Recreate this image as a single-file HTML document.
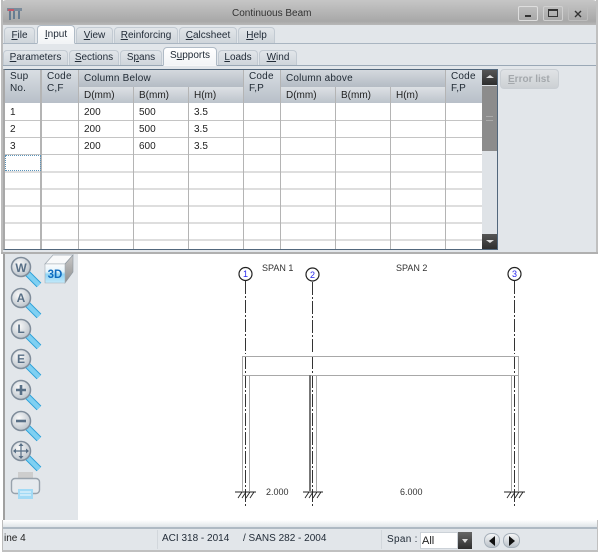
<!DOCTYPE html>
<html><head><meta charset="utf-8">
<style>
html,body{margin:0;padding:0;background:#fff}
body{width:600px;height:554px;position:relative;overflow:hidden;font-family:"Liberation Sans",sans-serif;font-size:10px;color:#222}
.a{position:absolute}
.t{position:absolute;white-space:nowrap;line-height:12px}
u{text-decoration:underline}
.tab{position:absolute;background:linear-gradient(#e2e6ea,#cfd5db);border:1px solid #c2cad2;border-bottom:none;border-radius:4px 4px 0 0;box-sizing:border-box;text-align:center;color:#222c38;font-size:10px;line-height:15px}
.tab.on{background:linear-gradient(#fff,#f2f4f6);border-color:#b0bbc6}
.v{position:absolute;width:1px;background:#b4b4b4}
.h{position:absolute;height:1px;background:#c4c4c4;left:5px;width:477px}
.l{height:2px;background:#dedede}
.h8{font-size:10px;letter-spacing:.2px;color:#1f2933}
.c{font-size:10px;color:#222}
.btn{position:absolute;width:20px;height:15px;top:6px;border:1px solid #cfcfcf;border-radius:2px;box-sizing:border-box;background:linear-gradient(#bdbdbd,#a8a8a8)}
</style></head><body>
<div class="a" style="left:1px;top:0;width:597px;height:25px;background:linear-gradient(#c6c6c6,#a8a8a8 85%,#b8b8b8);border-radius:5px 5px 0 0"></div>
<div class="a" style="left:1px;top:0;width:2px;height:254px;background:#bcbcbc"></div>
<div class="a" style="left:596px;top:0;width:2px;height:254px;background:#c0c0c0"></div>
<div class="a" style="left:3px;top:25px;width:593px;height:229px;background:#e2e6ea"></div>
<svg class="a" style="left:7px;top:7px" width="16" height="14" viewBox="0 0 16 14"><rect x="0" y="1" width="15" height="3" fill="#7a8a9a"/><rect x="1" y="2" width="6" height="2" fill="#c25a6a"/><path d="M3 4v9M7 4v8M12 4v8" stroke="#55708a" stroke-width="1.6"/></svg>
<div class="t" style="left:232px;top:8px;font-size:10px;color:#333">Continuous Beam</div>
<div class="btn" style="left:518px;border-color:#dedede"><div class="a" style="left:6px;top:8px;width:6px;height:2px;background:#333"></div></div>
<div class="btn" style="left:543px"><div class="a" style="left:4px;top:2px;width:10px;height:8px;border:1px solid #333;border-top-width:2px;box-sizing:border-box"></div></div>
<div class="btn" style="left:568px;border-color:#bdbdbd"><svg class="a" style="left:5px;top:3px" width="8" height="8"><path d="M1 1L7 7M7 1L1 7" stroke="#333" stroke-width="1.4"/></svg></div>

<!-- menu tabs -->
<div class="a" style="left:3px;top:43px;width:593px;height:1px;background:#a9b5c1"></div>
<div class="tab" style="left:4px;top:27px;width:31px;height:16px"><u>F</u>ile</div>
<div class="tab on" style="left:37px;top:25px;width:38px;height:19px;line-height:17px;border-bottom:1px solid #f2f4f6"><u>I</u>nput</div>
<div class="tab" style="left:76px;top:27px;width:37px;height:16px"><u>V</u>iew</div>
<div class="tab" style="left:114px;top:27px;width:64px;height:16px"><u>R</u>einforcing</div>
<div class="tab" style="left:179px;top:27px;width:58px;height:16px"><u>C</u>alcsheet</div>
<div class="tab" style="left:238px;top:27px;width:37px;height:16px"><u>H</u>elp</div>

<!-- sub tabs -->
<div class="a" style="left:3px;top:65px;width:593px;height:1px;background:#9aa8b6"></div>
<div class="tab" style="left:3px;top:50px;width:65px;height:15px;line-height:14px"><u>P</u>arameters</div>
<div class="tab" style="left:69px;top:50px;width:50px;height:15px;line-height:14px"><u>S</u>ections</div>
<div class="tab" style="left:120px;top:50px;width:42px;height:15px;line-height:14px">S<u>p</u>ans</div>
<div class="tab on" style="left:163px;top:47px;width:54px;height:19px;border-bottom:1px solid #f6f7f8">S<u>u</u>pports</div>
<div class="tab" style="left:218px;top:50px;width:40px;height:15px;line-height:14px"><u>L</u>oads</div>
<div class="tab" style="left:259px;top:50px;width:38px;height:15px;line-height:14px"><u>W</u>ind</div>

<!-- grid -->
<div class="a" style="left:3px;top:69px;width:495px;height:181px;background:#fff;border:1px solid #52677c;border-left:2px solid #a8a8a8;box-sizing:border-box"></div>
<div class="a" style="left:5px;top:70px;width:477px;height:33px;background:linear-gradient(#d9dee3,#b8bfc8)"></div>
<div class="a" style="left:78px;top:70px;width:165px;height:17px;background:linear-gradient(#d4d9de,#b4bbc4)"></div>
<div class="a" style="left:280px;top:70px;width:165px;height:17px;background:linear-gradient(#d4d9de,#b4bbc4)"></div>
<div class="a" style="left:78px;top:87px;width:165px;height:16px;background:linear-gradient(#dde1e5,#bcc3cb)"></div>
<div class="a" style="left:280px;top:87px;width:165px;height:16px;background:linear-gradient(#dde1e5,#bcc3cb)"></div>
<div class="h" style="top:120px"></div><div class="h" style="top:137px"></div><div class="h" style="top:154px"></div>
<div class="h l" style="top:171px"></div><div class="h l" style="top:188px"></div><div class="h l" style="top:205px"></div><div class="h l" style="top:222px"></div><div class="h l" style="top:239px"></div>
<div class="v" style="left:40px;top:70px;height:179px;width:2px"></div>
<div class="v" style="left:78px;top:70px;height:179px"></div>
<div class="v" style="left:133px;top:87px;height:162px"></div>
<div class="v" style="left:188px;top:87px;height:162px"></div>
<div class="v" style="left:243px;top:70px;height:179px"></div>
<div class="v" style="left:280px;top:70px;height:179px"></div>
<div class="v" style="left:335px;top:87px;height:162px"></div>
<div class="v" style="left:390px;top:87px;height:162px"></div>
<div class="v" style="left:445px;top:70px;height:179px"></div>
<div class="a" style="left:5px;top:155px;width:36px;height:16px;border:1px dotted #5a93ba;box-sizing:border-box"></div>

<div class="t h8" style="left:10px;top:71px;line-height:12px">Sup<br>No.</div>
<div class="t h8" style="left:47px;top:71px;line-height:12px">Code<br>C,F</div>
<div class="t h8" style="left:84px;top:73px">Column Below</div>
<div class="t h8" style="left:249px;top:71px;line-height:12px">Code<br>F,P</div>
<div class="t h8" style="left:286px;top:73px">Column above</div>
<div class="t h8" style="left:451px;top:71px;line-height:12px">Code<br>F,P</div>
<div class="t" style="left:84px;top:90px">D(mm)</div><div class="t" style="left:139px;top:90px">B(mm)</div><div class="t" style="left:194px;top:90px">H(m)</div>
<div class="t" style="left:286px;top:90px">D(mm)</div><div class="t" style="left:341px;top:90px">B(mm)</div><div class="t" style="left:396px;top:90px">H(m)</div>
<div class="t c" style="left:10px;top:107px">1</div><div class="t c" style="left:84px;top:107px">200</div><div class="t c" style="left:139px;top:107px">500</div><div class="t c" style="left:194px;top:107px">3.5</div>
<div class="t c" style="left:10px;top:124px">2</div><div class="t c" style="left:84px;top:124px">200</div><div class="t c" style="left:139px;top:124px">500</div><div class="t c" style="left:194px;top:124px">3.5</div>
<div class="t c" style="left:10px;top:141px">3</div><div class="t c" style="left:84px;top:141px">200</div><div class="t c" style="left:139px;top:141px">600</div><div class="t c" style="left:194px;top:141px">3.5</div>

<!-- scrollbar -->
<div class="a" style="left:482px;top:70px;width:15px;height:179px;background:#dfe3e7"></div>
<div class="a" style="left:482px;top:70px;width:15px;height:15px;background:linear-gradient(#555,#2e2e2e)"></div>
<div class="a" style="left:486px;top:75px;width:0;height:0;border-left:4px solid transparent;border-right:4px solid transparent;border-bottom:3px solid #ddd"></div>
<div class="a" style="left:482px;top:86px;width:15px;height:65px;background:#8c8c8c"></div>
<div class="a" style="left:486px;top:116px;width:7px;height:3px;border-top:1px solid #aaa;border-bottom:1px solid #aaa"></div>
<div class="a" style="left:482px;top:234px;width:15px;height:15px;background:linear-gradient(#555,#2e2e2e)"></div>
<div class="a" style="left:486px;top:240px;width:0;height:0;border-left:4px solid transparent;border-right:4px solid transparent;border-top:3px solid #ddd"></div>

<!-- error list -->
<div class="a" style="left:500px;top:69px;width:59px;height:20px;border:1px solid #c9ced3;border-radius:4px;box-sizing:border-box;background:linear-gradient(#e0e3e6,#ccd0d4)"></div>
<div class="t" style="left:508px;top:74px;font-weight:bold;color:#a4a8ac;font-size:10px"><u>E</u>rror list</div>

<!-- lower area -->
<div class="a" style="left:1px;top:252px;width:597px;height:2px;background:#b0b0b0"></div>
<div class="a" style="left:3px;top:254px;width:2px;height:266px;background:#a0a0a0"></div>
<div class="a" style="left:5px;top:254px;width:73px;height:266px;background:#e2e6ea"></div>

<svg class="a" style="left:0;top:254px" width="78" height="266" viewBox="0 254 78 266">
<defs>
<radialGradient id="g" cx=".4" cy=".35" r=".7"><stop offset="0" stop-color="#fafafa"/><stop offset="1" stop-color="#b9c1c9"/></radialGradient>
<linearGradient id="cube" x1="0" y1="0" x2="0" y2="1"><stop offset="0" stop-color="#fbfcfd"/><stop offset=".4" stop-color="#e4f4fb"/><stop offset=".55" stop-color="#8fd3f4"/><stop offset="1" stop-color="#c4eafa"/></linearGradient>
<linearGradient id="side" x1="0" y1="0" x2="0" y2="1"><stop offset="0" stop-color="#c8c8c8"/><stop offset="1" stop-color="#8f8f8f"/></linearGradient>
<g id="m"><path d="M15 15L27 27" stroke="#2a9fd8" stroke-width="6.5"/><path d="M15 15L27 27" stroke="#7fd0f2" stroke-width="4.5"/><circle cx="9" cy="9" r="9.5" fill="url(#g)" stroke="#7f8c9a" stroke-width="1.5"/></g>
</defs>
<use href="#m" x="12" y="258"/><use href="#m" x="12" y="289"/><use href="#m" x="12" y="320"/><use href="#m" x="12" y="350"/><use href="#m" x="12" y="381"/><use href="#m" x="12" y="412"/><use href="#m" x="12" y="442"/>
<text x="21" y="272" text-anchor="middle" font-family="Liberation Sans" font-weight="bold" font-size="12" fill="#586f86">W</text>
<text x="21" y="302" text-anchor="middle" font-family="Liberation Sans" font-weight="bold" font-size="12" fill="#586f86">A</text>
<text x="21" y="333" text-anchor="middle" font-family="Liberation Sans" font-weight="bold" font-size="12" fill="#586f86">L</text>
<text x="21" y="363" text-anchor="middle" font-family="Liberation Sans" font-weight="bold" font-size="12" fill="#586f86">E</text>
<path d="M16 390h10M21 385v10" stroke="#586f86" stroke-width="2.6"/>
<path d="M16 421h10" stroke="#586f86" stroke-width="2.6"/>
<path d="M15 451h12M21 445v12" stroke="#586f86" stroke-width="1.2"/>
<path d="M21 443l-2.5 3h5zM21 459l-2.5-3h5zM13 451l3-2.5v5zM29 451l-3-2.5v5z" fill="#586f86"/>
<!-- 3D cube -->
<path d="M45 264L53 255H73L65 264Z" fill="#f8f9fa" stroke="#a4adb5" stroke-width=".8"/>
<path d="M65 264L73 255V272L65 283Z" fill="url(#side)" stroke="#8d97a0" stroke-width=".6"/>
<path d="M45 264H65V283H45Z" fill="url(#cube)" stroke="#a4adb5" stroke-width=".6"/>
<text x="55" y="278" text-anchor="middle" font-family="Liberation Sans" font-weight="bold" font-size="11.5" fill="#0f6cc0">3D</text>
<!-- printer -->
<rect x="18" y="472" width="15" height="11" fill="#cdcdcd"/>
<rect x="11.5" y="478.5" width="28" height="15" rx="3.5" fill="#e6eaee" stroke="#98a2ac" stroke-width="1.4"/>
<rect x="18" y="489" width="15" height="10" fill="#a2daf5"/>
<path d="M20 492h11M20 495h11" stroke="#e4f4fc" stroke-width="1.3"/>
</svg>

<!-- drawing -->
<svg class="a" style="left:78px;top:254px" width="518" height="266" viewBox="78 254 518 266">
<g fill="none" stroke="#333" stroke-width="1" shape-rendering="crispEdges">
<path d="M245.5 281V354" stroke-dasharray="13 2 2 2"/>
<path d="M312.5 282V354" stroke-dasharray="13 2 2 2"/>
<path d="M514.5 281V354" stroke-dasharray="13 2 2 2"/>
<path d="M245.5 356V506M312.5 356V506M514.5 356V506" stroke-dasharray="13 2 2 2"/>
</g>
<g fill="#fff" stroke="#222" stroke-width="1.2">
<circle cx="245.5" cy="274" r="6.5"/><circle cx="312.5" cy="274.5" r="6.5"/><circle cx="514.5" cy="274" r="6.5"/>
</g>
<g font-family="Liberation Sans" font-size="9" fill="#2a2aee" text-anchor="middle">
<text x="245.5" y="277">1</text><text x="312.5" y="278">2</text><text x="514.5" y="277">3</text>
</g>
<g fill="none" stroke="#a8a8a8" stroke-width="1" shape-rendering="crispEdges">
<path d="M242.5 356.5H518.5V375.5H242.5Z"/>
<path d="M242.5 375V491M249.5 375V491M316.5 375V491M511.5 375V491M518.5 375V491"/>
</g>
<path d="M310 375V491" stroke="#777" stroke-width="2" shape-rendering="crispEdges"/>
<g stroke="#222" stroke-width="1" fill="none">
<path d="M235 492H256M303 492H323M504 492H525" shape-rendering="crispEdges"/>
<path d="M238 498l4-6M242 498l4-6M246 498l4-6M250 498l4-6M305 498l4-6M309 498l4-6M313 498l4-6M317 498l4-6M507 498l4-6M511 498l4-6M515 498l4-6M519 498l4-6" stroke-width=".9"/>
</g>
<g font-family="Liberation Sans" font-size="9" fill="#333">
<text x="262" y="271">SPAN 1</text><text x="396" y="271">SPAN 2</text>
<text x="266" y="495">2.000</text><text x="400" y="495">6.000</text>
</g>
</svg>

<!-- status -->
<div class="a" style="left:3px;top:520px;width:594px;height:7px;background:linear-gradient(#fff,#dfe4e8)"></div>
<div class="a" style="left:3px;top:527px;width:594px;height:2px;background:#aeb9c3"></div>
<div class="a" style="left:3px;top:529px;width:594px;height:21px;background:#e2e6ea"></div>
<div class="a" style="left:2px;top:520px;width:1px;height:31px;background:#bcbcbc"></div>
<div class="a" style="left:597px;top:520px;width:1px;height:31px;background:#c0c0c0"></div>
<div class="a" style="left:2px;top:550px;width:596px;height:2px;background:#c0c0c0"></div>
<div class="a" style="left:157px;top:530px;width:1px;height:19px;background:#d2d7dc"></div>
<div class="a" style="left:381px;top:530px;width:1px;height:19px;background:#d2d7dc"></div>
<div class="t" style="left:4px;top:533px;font-size:10px">ine 4</div>
<div class="t" style="left:162px;top:533px;font-size:10px;color:#222c38">ACI 318 - 2014</div>
<div class="t" style="left:243px;top:533px;font-size:10px;color:#222c38">/ SANS 282 - 2004</div>
<div class="t" style="left:387px;top:534px;font-size:10px;color:#222c38;letter-spacing:.3px">Span :</div>
<div class="a" style="left:420px;top:532px;width:38px;height:17px;background:#fff;border:1px solid #ccd2d8;box-sizing:border-box"></div>
<div class="t" style="left:422px;top:535px;font-size:11px;color:#222">All</div>
<div class="a" style="left:458px;top:532px;width:14px;height:17px;background:linear-gradient(#666,#2e2e2e)"></div>
<div class="a" style="left:462px;top:539px;width:0;height:0;border-left:3.5px solid transparent;border-right:3.5px solid transparent;border-top:4px solid #ddd"></div>
<div class="a" style="left:484px;top:533px;width:16px;height:15px;border-radius:7px;background:linear-gradient(#f4f5f6,#bcc3ca);border:1px solid #a6b0ba;box-sizing:border-box"></div>
<div class="a" style="left:503px;top:533px;width:17px;height:15px;border-radius:7px;background:linear-gradient(#f4f5f6,#bcc3ca);border:1px solid #a6b0ba;box-sizing:border-box"></div>
<div class="a" style="left:489px;top:536px;width:0;height:0;border-top:5px solid transparent;border-bottom:5px solid transparent;border-right:6px solid #111"></div>
<div class="a" style="left:509px;top:536px;width:0;height:0;border-top:5px solid transparent;border-bottom:5px solid transparent;border-left:6px solid #111"></div>
</body></html>
